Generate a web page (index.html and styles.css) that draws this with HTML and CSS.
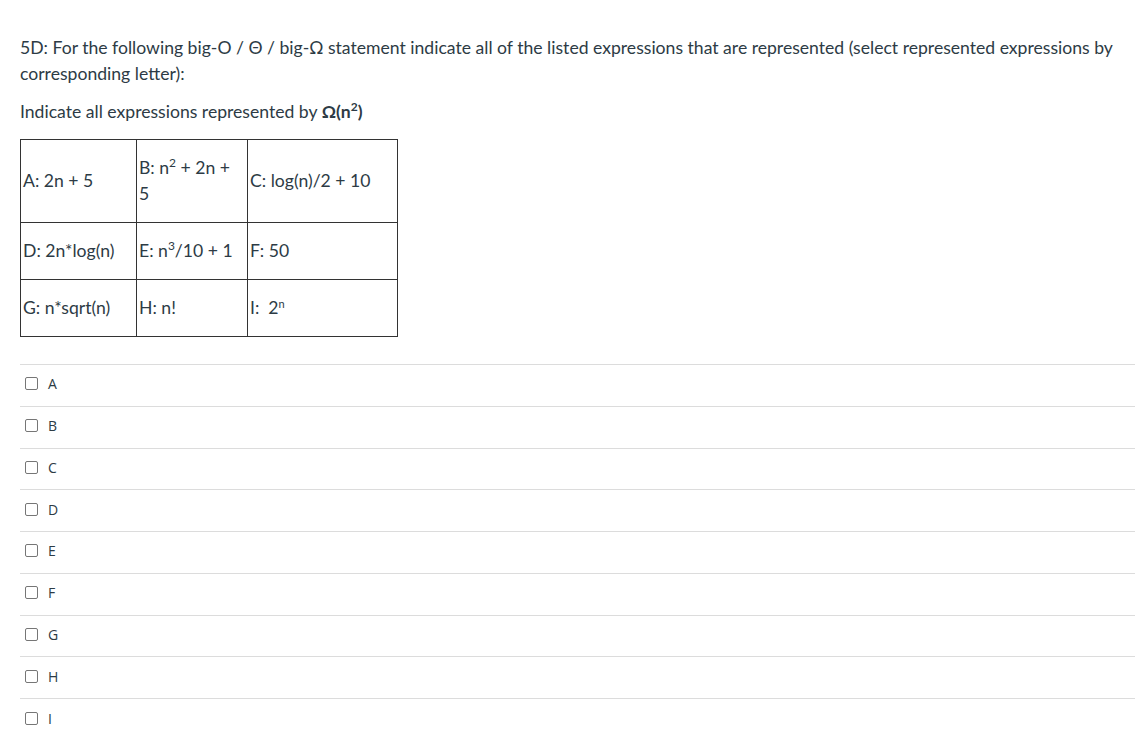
FILE: index.html
```html
<!DOCTYPE html>
<html lang="en">
<head>
    <meta charset="UTF-8">
    <title>Quiz question 5D</title>
    <link rel="stylesheet" href="styles.css">
</head>
<body>
    <div class="question">
        <div class="question-text">
            <p>5D: For the following big-O / &Theta; / big-&Omega; statement indicate all of the listed expressions that are represented (select represented expressions by corresponding letter):</p>
            <p>Indicate all expressions represented by <strong>&Omega;(n<sup>2</sup>)</strong></p>

            <table class="expr-table">
                <colgroup>
                    <col class="col-a">
                    <col class="col-b">
                    <col class="col-c">
                </colgroup>
                <tbody>
                    <tr>
                        <td>A: 2n + 5</td>
                        <td>B: n<sup>2</sup> + 2n +<br>5</td>
                        <td>C: log(n)/2 + 10</td>
                    </tr>
                    <tr>
                        <td>D: 2n*log(n)</td>
                        <td>E: n<sup>3</sup>/10 + 1</td>
                        <td>F: 50</td>
                    </tr>
                    <tr>
                        <td>G: n*sqrt(n)</td>
                        <td>H: n!</td>
                        <td>I:&nbsp; 2<sup class="small">n</sup></td>
                    </tr>
                </tbody>
            </table>
        </div>

        <div class="answers">
            <label class="answer"><input type="checkbox"><span>A</span></label>
            <label class="answer"><input type="checkbox"><span>B</span></label>
            <label class="answer"><input type="checkbox"><span>C</span></label>
            <label class="answer"><input type="checkbox"><span>D</span></label>
            <label class="answer"><input type="checkbox"><span>E</span></label>
            <label class="answer"><input type="checkbox"><span>F</span></label>
            <label class="answer"><input type="checkbox"><span>G</span></label>
            <label class="answer"><input type="checkbox"><span>H</span></label>
            <label class="answer"><input type="checkbox"><span>I</span></label>
        </div>
    </div>
</body>
</html>
```

FILE: styles.css
```css
body {
    margin: 0;
    font-family: Lato, "Liberation Sans", sans-serif;
    color: #2d3b45;
    background: #fff;
}

.question {
    padding: 35px 13px 0 20px;
}

.question-text p {
    margin: 0 0 12px 0;
    font-size: 17.6px;
    line-height: 26px;
}

sup {
    font-size: 12px;
    line-height: 0;
    position: relative;
    vertical-align: baseline;
    top: -7px;
}

sup.small {
    font-size: 11px;
    top: -6px;
}

/* tabela das expressões */
.expr-table {
    border-collapse: collapse;
    table-layout: fixed;
    width: 377px;
    margin-top: 14px;
    font-size: 17.6px;
    line-height: 26px;
}

.col-a { width: 116px; }
.col-b { width: 111px; }
.col-c { width: 150px; }

.expr-table td {
    border: 1px solid #333;
    padding: 15px 2px 15px 2px;
    vertical-align: middle;
    text-align: left;
    white-space: nowrap;
}

/* respostas */
.answers {
    margin-top: 27px;
    border-top: 1px solid #dcdcdc;
}

.answer {
    box-sizing: border-box;
    display: flex;
    align-items: center;
    height: 41.75px;
    padding-bottom: 3px;
    border-bottom: 1px solid #dcdcdc;
    font-family: "Open Sans", "Noto Sans", sans-serif;
    font-size: 14px;
    color: #2d3b45;
}

.answer:last-child {
    border-bottom: none;
}

.answer input {
    appearance: none;
    width: 13px;
    height: 13px;
    margin: 0 10px 0 5px;
    border: 1px solid #767676;
    border-radius: 2px;
    background: #fff;
}
```
